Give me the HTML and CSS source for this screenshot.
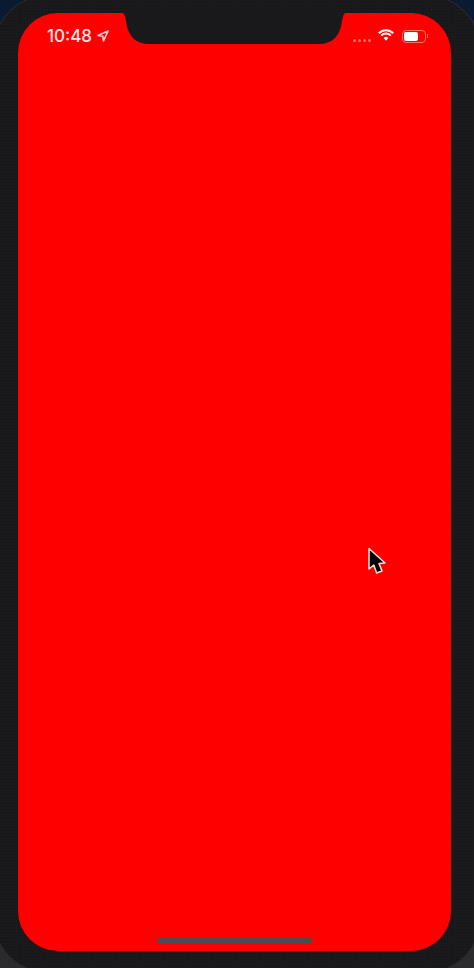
FILE: index.html
```html
<!DOCTYPE html>
<html lang="en">
<head>
  <meta charset="UTF-8">
  <meta name="viewport" content="width=device-width, initial-scale=1.0">
  <title>Simulator</title>
  <link rel="stylesheet" href="styles.css">
</head>
<body>
  <div class="phone">
    <div class="screen">
      <div class="status-bar">
        <div class="status-left">
          <span class="time">10:48</span>
          <svg class="location" viewBox="0 0 10 10"><path d="M9.2 0.8 L0.8 4.6 L4.8 5.2 L5.4 9.2 Z" fill="none" stroke="#ffd6d6" stroke-width="1.3" stroke-linejoin="round"/></svg>
        </div>
        <div class="status-right">
          <div class="signal"><i></i><i></i><i></i><i></i></div>
          <svg class="wifi" viewBox="0 0 16 12"><path d="M0.8 4.2 A10 10 0 0 1 15.2 4.2" fill="none" stroke="#fff" stroke-width="2"/><path d="M3.2 6.6 A6.6 6.6 0 0 1 12.8 6.6" fill="none" stroke="#fff" stroke-width="2"/><path d="M5.6 9 A3.3 3.3 0 0 1 10.4 9 L8 11.8 Z" fill="#fff"/></svg>
          <div class="battery"><div class="battery-level"></div></div>
          <div class="battery-cap"></div>
        </div>
      </div>
      <div class="home-bar"></div>
      <svg class="notch" viewBox="0 0 222 31"><path d="M0 0 H222 C220 2 220 4 219 8 C217 23 210 31 195 31 H27 C12 31 5 23 3 8 C2 4 2 2 0 0 Z" fill="#19191b"/></svg>
      <svg class="cursor" viewBox="0 0 20 28"><path d="M2 1.5 L2 22 L6.8 18 L9.6 26 L15 24 L12 16.4 L18 16 Z" fill="#000" stroke="#f4dede" stroke-width="1.5" stroke-linejoin="round"/></svg>
    </div>
  </div>
</body>
</html>
```

FILE: styles.css
```css
* {
  margin: 0;
  padding: 0;
  box-sizing: border-box;
}

html, body {
  width: 474px;
  height: 968px;
  overflow: hidden;
}

body {
  background: linear-gradient(#0a1a30 0%, #0a1a30 50%, #2b2b2e 50%, #2b2b2e 100%);
  font-family: 'Inter', 'Liberation Sans', sans-serif;
}

/* the device is a little bigger than the window, its corners get cut off */
.phone {
  width: 490px;
  height: 980px;
  margin: -6px 0 0 -8px;
  padding: 19px 31px 23px 26px;
  background-color: #1a1a1c;
  background-image: radial-gradient(#131315 35%, transparent 40%);
  background-size: 3px 3px;
  border: 1px solid #2c2e33;
  border-radius: 58px;
}

.screen {
  position: relative;
  height: 938px;
  margin: -1px;
  display: flex;
  flex-direction: column;
  justify-content: space-between;
  background: #ff0000;
  border-radius: 40px;
}

.status-bar {
  display: flex;
  justify-content: space-between;
  align-items: center;
  padding: 14px 23px 0 29px;
}

.status-left {
  display: flex;
  align-items: center;
  gap: 5px;
}

.time {
  color: #ffe6e6;
  font-size: 17px;
  font-weight: 500;
  line-height: 18px;
}

.location {
  width: 12px;
  height: 12px;
}

.status-right {
  display: flex;
  align-items: center;
}

.signal {
  display: flex;
  gap: 2px;
  margin: 8px 7px 0 0;
}

.signal i {
  width: 3px;
  height: 3px;
  border-radius: 50%;
  background: #ff6a6a;
}

.wifi {
  width: 16px;
  height: 12px;
  margin: -2px 8px 0 0;
}

.battery {
  width: 24px;
  height: 13px;
  padding: 1px;
  border: 1px solid #ff7070;
  border-radius: 4px;
}

.battery-level {
  width: 14px;
  height: 9px;
  background: #fff;
  border-radius: 2px;
}

.battery-cap {
  width: 1px;
  height: 4px;
  margin-left: 1px;
  background: #ff7070;
}

.home-bar {
  align-self: center;
  width: 155px;
  height: 5px;
  margin-bottom: 8px;
  background: #4b4b4f;
  border-radius: 3px;
}

/* sits over the top edge of the screen */
.notch {
  position: absolute;
  left: 105px;
  top: 0;
  width: 222px;
  height: 31px;
}

.cursor {
  position: absolute;
  left: 349px;
  top: 534px;
  width: 20px;
  height: 28px;
}
```
